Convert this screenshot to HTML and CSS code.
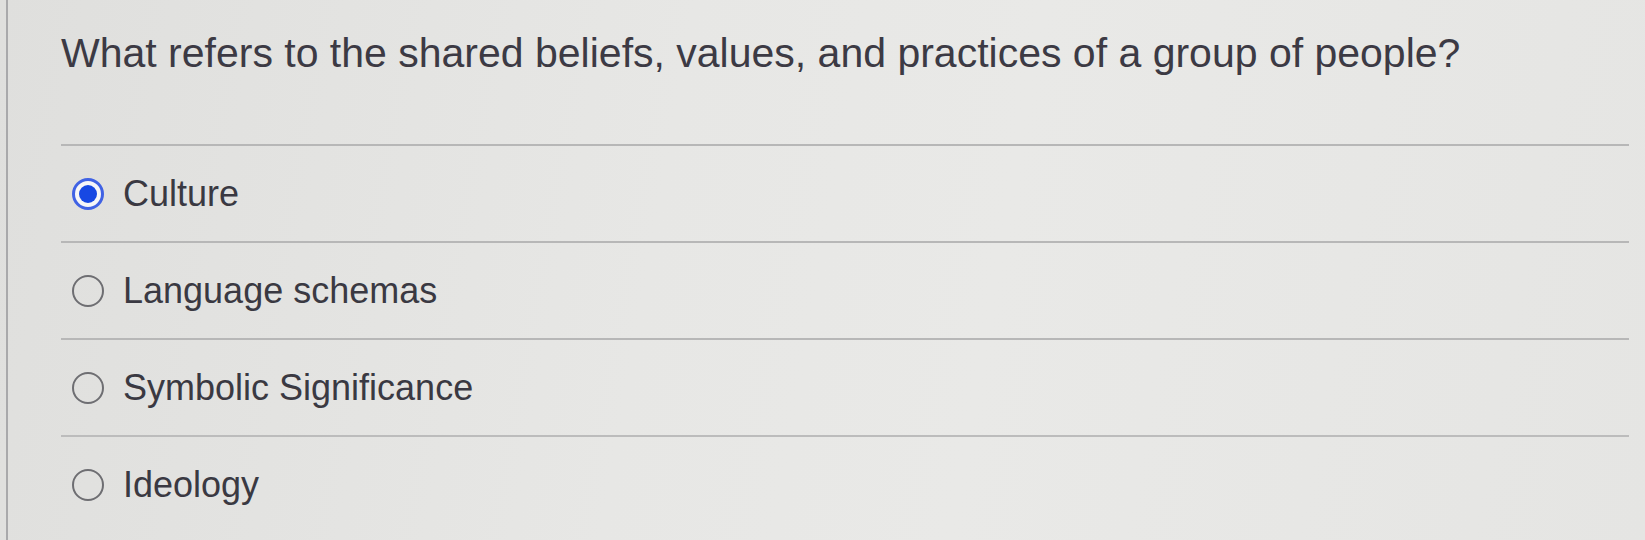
FILE: index.html
```html
<!DOCTYPE html>
<html>
<head>
<meta charset="utf-8">
<link rel="stylesheet" href="styles.css">
</head>
<body>
<div class="screen">
  <div class="panel">
    <h1 class="question">What refers to the shared beliefs, values, and practices of a group of people?</h1>
    <div class="options">
      <label class="option">
        <span class="radio checked"><span class="dot"></span></span>
        <span class="label">Culture</span>
      </label>
      <label class="option">
        <span class="radio"></span>
        <span class="label">Language schemas</span>
      </label>
      <label class="option">
        <span class="radio"></span>
        <span class="label">Symbolic Significance</span>
      </label>
      <label class="option last">
        <span class="radio"></span>
        <span class="label">Ideology</span>
      </label>
    </div>
  </div>
</div>
</body>
</html>
```

FILE: styles.css
```css
html, body {
  margin: 0;
  padding: 0;
  height: 100%;
  overflow: hidden;
}

body {
  background: #e3e3e1;
  font-family: "Liberation Sans", Arial, Helvetica, sans-serif;
  color: #3b3a40;
}

.screen {
  height: 540px;
  padding-left: 6px;
  background: linear-gradient(100deg, #dfdfdd 0%, #e7e7e5 40%, #e9e9e7 60%, #e5e5e3 100%);
}

.panel {
  height: 100%;
  border-left: 2px solid #a9a9ab;
  padding-left: 53px;
  padding-right: 16px;
  box-sizing: border-box;
}

.question {
  margin: 0;
  padding-top: 29px;
  font-size: 41px;
  line-height: 48px;
  font-weight: normal;
  letter-spacing: 0;
  color: #3c3a44;
}

.options {
  margin-top: 67px;
}

.option {
  display: flex;
  align-items: center;
  height: 95px;
  border-top: 2px solid #b7b7b7;
}

.option.last {
  border-top-color: #bcbcbc;
}

.radio {
  box-sizing: border-box;
  width: 32px;
  height: 32px;
  margin-left: 11px;
  border: 2px solid #6e6e72;
  border-radius: 50%;
  background: transparent;
  display: flex;
  align-items: center;
  justify-content: center;
  flex-shrink: 0;
}

.radio.checked {
  border: 3px solid #4062e4;
  background: #f6f6f8;
}

.dot {
  width: 18px;
  height: 18px;
  border-radius: 50%;
  background: #1748e3;
}

.label {
  margin-left: 19px;
  font-size: 36px;
  line-height: 40px;
  color: #3a3942;
}
```
